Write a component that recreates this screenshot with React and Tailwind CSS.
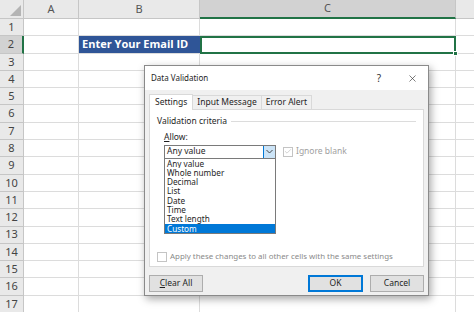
import { Check, X } from "lucide-react";

const rowNums = Array.from({ length: 17 }, (_, i) => i + 1);
const options = ["Any value", "Whole number", "Decimal", "List", "Date", "Time", "Text length", "Custom"];

function HeaderCell({ label, w, active }) {
  return (
    <div
      className={`${w} h-full shrink-0 flex items-center justify-center border-r border-[#c6c6c6] text-[11px] text-[#555] ${
        active ? "bg-[#d2d2d2] border-b-2 border-b-[#217346]" : "bg-[#e9e9e9] border-b border-b-[#c6c6c6]"
      }`}
    >
      {label}
    </div>
  );
}

function SheetRow({ n }) {
  const active = n === 2;
  return (
    <div className="flex h-[17.3px]">
      <div
        className={`w-[24px] shrink-0 flex items-center justify-center text-[11px] text-[#444] border-b border-[#c6c6c6] ${
          active ? "bg-[#d2d2d2] border-r-2 border-r-[#217346]" : "bg-[#e9e9e9] border-r border-r-[#c6c6c6]"
        }`}
      >
        {n}
      </div>
      <div className="w-[55px] shrink-0 border-r border-b border-[#dcdcdc]" />
      {active ? (
        <div className="w-[121px] shrink-0 bg-[#2f5597] border-b border-[#dcdcdc] flex items-center pl-[3px] text-white font-bold text-[11px] font-['Open_Sans',sans-serif]">
          Enter Your Email ID
        </div>
      ) : (
        <div className="w-[121px] shrink-0 border-r border-b border-[#dcdcdc]" />
      )}
      {active ? (
        <div className="relative w-[256px] shrink-0 border-2 border-[#217346]">
          <div className="absolute -right-[4px] -bottom-[4px] w-[5px] h-[5px] bg-[#217346] border border-white" />
        </div>
      ) : (
        <div className="w-[256px] shrink-0 border-r border-b border-[#dcdcdc]" />
      )}
      <div className="flex-1 border-b border-[#dcdcdc]" />
    </div>
  );
}

function Tab({ label, selected }) {
  return selected ? (
    <div className="relative z-10 h-[16px] -mb-px px-[5px] flex items-center bg-white border border-b-0 border-[#d9d9d9] text-[#1e1e1e]">
      {label}
    </div>
  ) : (
    <div className="h-[14px] px-[4px] flex items-center bg-[#f0f0f0] border border-b-0 border-l-0 border-[#d9d9d9] text-[#1e1e1e]">
      {label}
    </div>
  );
}

export default function App() {
  return (
    <div className="relative w-[474px] h-[312px] overflow-hidden bg-white font-['Noto_Sans',sans-serif]">
      <div className="flex h-[19px]">
        <div className="w-[24px] shrink-0 h-full bg-[#e9e9e9] border-r border-b border-[#c6c6c6] relative">
          <div className="absolute right-[2px] bottom-[2px] w-0 h-0 border-l-[11px] border-l-transparent border-b-[11px] border-b-[#b4b4b4]" />
        </div>
        <HeaderCell label="A" w="w-[55px]" />
        <HeaderCell label="B" w="w-[121px]" />
        <HeaderCell label="C" w="w-[256px]" active />
        <div className="flex-1 h-full bg-[#e9e9e9] border-b border-[#c6c6c6]" />
      </div>
      {rowNums.map((n) => (
        <SheetRow key={n} n={n} />
      ))}

      {/* Data Validation dialog */}
      <div className="absolute left-[144px] top-[65px] w-[285px] h-[231px] flex flex-col bg-[#f0f0f0] border border-[#8a8a8a] shadow-[2px_3px_8px_rgba(0,0,0,0.35)] text-[8.5px] text-[#1e1e1e]">
        <div className="h-[24px] shrink-0 bg-white flex items-center pl-[6px] pr-[10px]">
          <span className="text-[8px]">Data Validation</span>
          <span className="ml-auto mr-[26px] text-[10px] text-[#333]">?</span>
          <X size={11} strokeWidth={1.4} className="text-[#333]" />
        </div>

        <div className="flex items-end px-[4px] pt-[4px]">
          <Tab label="Settings" selected />
          <Tab label="Input Message" />
          <Tab label="Error Alert" />
        </div>

        <div className="mx-[4px] h-[158px] shrink-0 bg-white border border-[#d9d9d9] flex flex-col px-[7px] pt-[5px]">
          <div className="flex items-center gap-[4px]">
            <span>Validation criteria</span>
            <div className="flex-1 h-px bg-[#dcdcdc]" />
          </div>
          <div className="mt-[3px] ml-[7px]">
            <span className="underline">A</span>llow:
          </div>
          <div className="ml-[7px] mt-[1px] flex items-center">
            <div className="relative w-[112px] h-[14px] border border-[#7a7a7a] bg-white flex items-center">
              <span className="pl-[2px]">Any value</span>
              <div className="ml-auto h-full w-[12px] bg-[#cce4f7] border-l border-[#0078d7] flex items-center justify-center">
                <svg width="7" height="5" viewBox="0 0 7 5">
                  <path d="M0.5 1 L3.5 4 L6.5 1" fill="none" stroke="#333" strokeWidth="0.9" />
                </svg>
              </div>
              <div className="absolute left-[-1px] top-[12px] w-[112px] bg-white border border-[#7a7a7a] z-10 text-[8.2px] leading-[9.3px]">
                {options.map((o) => (
                  <div
                    key={o}
                    className={`h-[9.3px] pl-[2px] overflow-hidden ${o === "Custom" ? "bg-[#0078d7] text-white" : ""}`}
                  >
                    {o}
                  </div>
                ))}
              </div>
            </div>
            <div className="ml-[7px] w-[10px] h-[10px] border border-[#c4c4c4] flex items-center justify-center">
              <Check size={9} strokeWidth={1.5} className="text-[#a6a6a6]" />
            </div>
            <span className="ml-[3px] text-[#a0a0a0]">Ignore blank</span>
          </div>
          <div className="mt-auto mb-[3px] flex items-center">
            <div className="w-[10px] h-[10px] shrink-0 border border-[#c4c4c4] bg-white" />
            <span className="ml-[3px] whitespace-nowrap text-[7.9px] text-[#8a8a8a]">
              Apply these changes to all other cells with the same settings
            </span>
          </div>
        </div>

        <div className="flex items-center px-[4px] mt-[8px]">
          <button className="w-[54px] h-[17px] bg-[#e1e1e1] border border-[#adadad] flex items-center justify-center">
            <span className="underline">C</span>lear All
          </button>
          <button className="ml-auto w-[55px] h-[17px] bg-[#e1e1e1] border-2 border-[#0078d7] flex items-center justify-center">
            OK
          </button>
          <button className="ml-[7px] w-[54px] h-[17px] bg-[#e1e1e1] border border-[#adadad] flex items-center justify-center">
            Cancel
          </button>
        </div>
      </div>
    </div>
  );
}
